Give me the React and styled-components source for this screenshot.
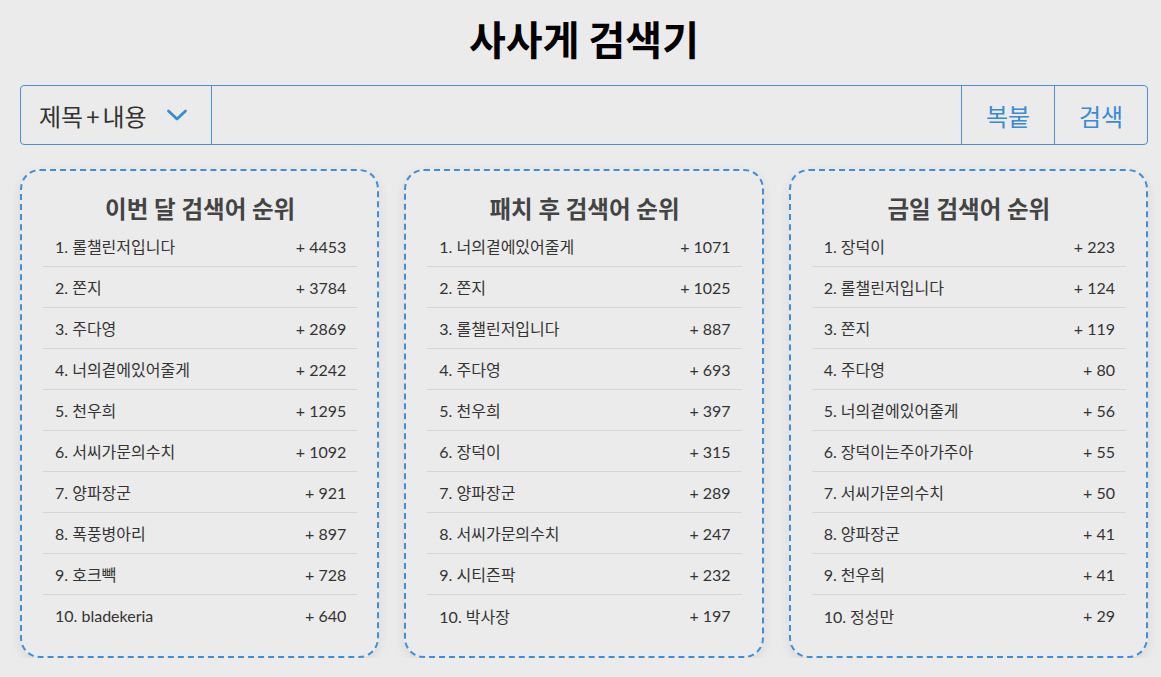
import React from "react";
import styled, { createGlobalStyle } from "styled-components";

const Global = createGlobalStyle`
  html, body { margin: 0; padding: 0; background: #ebebeb; }
  body { font-family: Lato, "Noto Sans CJK KR", sans-serif; color: #333; }
  * { box-sizing: border-box; }
`;

const Page = styled.div`
  width: 1161px;
  padding: 0 13px 0 20px;
  display: flex;
  flex-direction: column;
`;

const Title = styled.h1`
  margin: 0;
  height: 85px;
  display: flex;
  align-items: center;
  justify-content: center;
  font-family: "Noto Sans CJK KR", sans-serif;
  font-weight: 700;
  font-size: 40px;
  color: #000;
  padding-bottom: 10px;
`;

const SearchBar = styled.div`
  display: flex;
  height: 60px;
  border: 1px solid #4a90d2;
  border-radius: 4px;
  width: 1128px;
`;

const Select = styled.div`
  width: 191px;
  display: flex;
  align-items: center;
  padding-left: 18px;
  gap: 19px;
  border-right: 1px solid #4a90d2;
  font-family: "Noto Sans CJK KR", sans-serif;
  font-size: 24px;
  color: #333;
`;

const Plus = styled.span`
  padding: 0 3px;
`;

const Input = styled.div`
  flex: 1;
`;

const Btn = styled.div`
  width: ${(p) => p.w}px;
  display: flex;
  align-items: center;
  justify-content: center;
  border-left: 1px solid #4a90d2;
  font-family: "Noto Sans CJK KR", sans-serif;
  font-size: 24px;
  color: #3a8ad6;
`;

const Cards = styled.div`
  display: flex;
  gap: 25px;
  margin-top: 24px;
  width: 1128px;
`;

const Card = styled.div`
  flex: 1;
  height: 489px;
  border: 2px dashed #3f8fd8;
  border-radius: 20px;
  box-shadow: 0 4px 12px rgba(0, 0, 0, 0.08);
  padding: 19px 20px 0 21px;
  display: flex;
  flex-direction: column;
`;

const CardTitle = styled.h2`
  margin: 0;
  text-align: center;
  font-size: 23.5px;
  font-weight: 700;
  color: #444;
  height: 36px;
  line-height: 38px;
`;

const List = styled.div`
  display: flex;
  flex-direction: column;
`;

const Row = styled.div`
  height: 41px;
  display: flex;
  align-items: center;
  justify-content: space-between;
  padding: 0 11px 0 12px;
  font-size: 16px;
  color: #333;
  border-bottom: ${(p) => (p.last ? "none" : "1px solid #d6d6d6")};
`;

const Chevron = () => (
  <svg width="22" height="14" viewBox="0 0 22 14" fill="none">
    <path d="M2.5 3 L11 11 L19.5 3" stroke="#3a8ad6" strokeWidth="2.8" strokeLinecap="round" strokeLinejoin="round" />
  </svg>
);

const data = [
  {
    title: "이번 달 검색어 순위",
    rows: [
      ["롤챌린저입니다", 4453],
      ["쫀지", 3784],
      ["주다영", 2869],
      ["너의곁에있어줄게", 2242],
      ["천우희", 1295],
      ["서씨가문의수치", 1092],
      ["양파장군", 921],
      ["폭풍병아리", 897],
      ["호크빽", 728],
      ["bladekeria", 640],
    ],
  },
  {
    title: "패치 후 검색어 순위",
    rows: [
      ["너의곁에있어줄게", 1071],
      ["쫀지", 1025],
      ["롤챌린저입니다", 887],
      ["주다영", 693],
      ["천우희", 397],
      ["장덕이", 315],
      ["양파장군", 289],
      ["서씨가문의수치", 247],
      ["시티즌팍", 232],
      ["박사장", 197],
    ],
  },
  {
    title: "금일 검색어 순위",
    rows: [
      ["장덕이", 223],
      ["롤챌린저입니다", 124],
      ["쫀지", 119],
      ["주다영", 80],
      ["너의곁에있어줄게", 56],
      ["장덕이는주아가주아", 55],
      ["서씨가문의수치", 50],
      ["양파장군", 41],
      ["천우희", 41],
      ["정성만", 29],
    ],
  },
];

export default function App() {
  return (
    <Page>
      <Global />
      <Title>사사게 검색기</Title>
      <SearchBar>
        <Select>
          <span>
            제목<Plus>+</Plus>내용
          </span>
          <Chevron />
        </Select>
        <Input />
        <Btn w={93}>복붙</Btn>
        <Btn w={93}>검색</Btn>
      </SearchBar>
      <Cards>
        {data.map((c) => (
          <Card key={c.title}>
            <CardTitle>{c.title}</CardTitle>
            <List>
              {c.rows.map(([name, n], i) => (
                <Row key={i} last={i === c.rows.length - 1}>
                  <span>
                    {i + 1}. {name}
                  </span>
                  <span>+ {n}</span>
                </Row>
              ))}
            </List>
          </Card>
        ))}
      </Cards>
    </Page>
  );
}
